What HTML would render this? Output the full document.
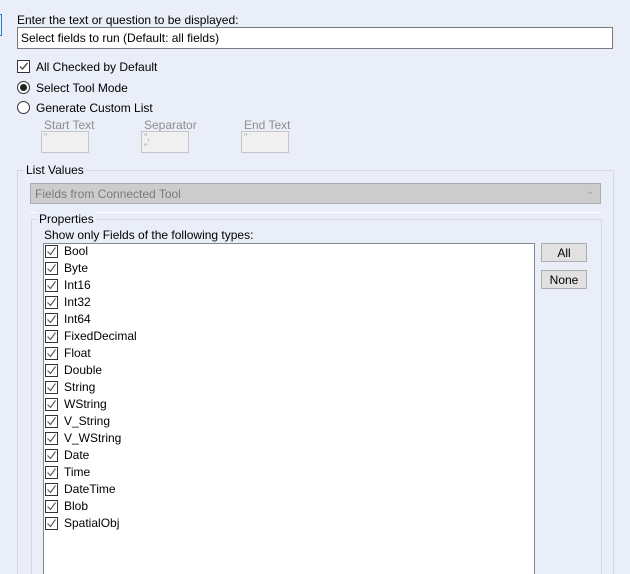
<!DOCTYPE html>
<html style="overflow:hidden;height:574px"><head><style>
body{margin:0;width:630px;height:574px;background:#eaeef8;font-family:"Liberation Sans",sans-serif;font-size:12px;color:#000;position:relative;overflow:hidden}
.a{position:absolute;white-space:nowrap}
.cb{position:absolute;width:11px;height:11px;border:1px solid #333;background:#fff}
.cb svg{position:absolute;left:0;top:0}
.rb{position:absolute;width:11px;height:11px;border:1px solid #333;border-radius:50%;background:#fff}
.gray{color:#8e8e8e}
.sb{position:absolute;width:48px;height:22px;border:1px solid #c6c6c6;background:#f0f0f0;font-size:9px;color:#999;line-height:10px;padding-left:2px;box-sizing:border-box}
.btn{position:absolute;width:46px;height:19px;border:1px solid #adadad;background:#e1e1e1;text-align:center;line-height:18px;box-sizing:border-box}
</style></head><body>
<div class="a" style="left:0;top:14px;width:1px;height:20px;border:1px solid #2a7ad6;border-left:none"></div>
<div class="a" style="left:17px;top:13px">Enter the text or question to be displayed:</div>
<div class="a" style="left:17px;top:27px;width:596px;height:22px;border:1px solid #7a7a7a;background:#fff;box-sizing:border-box;padding:3px 0 0 3px">Select fields to run (Default: all fields)</div>
<div class="cb" style="left:17px;top:60px"><svg width="11" height="11"><path d="M2 5.5l2.5 2.5 5-6" stroke="#333" fill="none" stroke-width="1.2"/></svg></div>
<div class="a" style="left:36px;top:60px">All Checked by Default</div>
<div class="rb" style="left:17px;top:81px"><div style="position:absolute;left:2px;top:2px;width:7px;height:7px;border-radius:50%;background:#222"></div></div>
<div class="a" style="left:36px;top:81px">Select Tool Mode</div>
<div class="rb" style="left:17px;top:101px"></div>
<div class="a" style="left:36px;top:101px">Generate Custom List</div>
<div class="a gray" style="left:44px;top:118px">Start Text</div>
<div class="a gray" style="left:144px;top:118px">Separator</div>
<div class="a gray" style="left:244px;top:118px">End Text</div>
<div class="sb" style="left:41px;top:131px">"</div>
<div class="sb" style="left:141px;top:131px">",<br>"</div>
<div class="sb" style="left:241px;top:131px">"</div>
<div class="a" style="left:17px;top:170px;width:597px;height:404px;border:1px solid #d5d8df;border-bottom:none;box-sizing:border-box"></div>
<div class="a" style="left:24px;top:163px;background:#eaeef8;padding:0 2px">List Values</div>
<div class="a" style="left:30px;top:183px;width:571px;height:21px;background:#cccccc;border:1px solid #adadad;box-sizing:border-box;color:#7a7a7a;padding:3px 0 0 4px">Fields from Connected Tool<span style="position:absolute;right:6px;top:2px;font-size:9px;color:#999">&#8964;</span></div>
<div class="a" style="left:30px;top:212px;width:570px;height:1px;background:#fff"></div>
<div class="a" style="left:31px;top:219px;width:571px;height:355px;border:1px solid #d5d8df;border-bottom:none;box-sizing:border-box"></div>
<div class="a" style="left:37px;top:212px;background:#eaeef8;padding:0 2px">Properties</div>
<div class="a" style="left:44px;top:228px">Show only Fields of the following types:</div>
<div class="a" style="left:43px;top:243px;width:492px;height:331px;border:1px solid #828790;border-bottom:none;background:#fff;box-sizing:border-box"></div>
<div class="btn" style="left:541px;top:243px">All</div>
<div class="btn" style="left:541px;top:270px">None</div>
<div id="items"></div>
<script>
var n=["Bool","Byte","Int16","Int32","Int64","FixedDecimal","Float","Double","String","WString","V_String","V_WString","Date","Time","DateTime","Blob","SpatialObj"],h="";
n.forEach(function(t,i){var y=244+i*17;h+='<div class="cb" style="left:45px;top:'+(y+1)+'px"><svg width="11" height="11"><path d="M1.5 5.5l3 3 5-7" stroke="#555" fill="none" stroke-width="1.1"/></svg></div><div class="a" style="left:64px;top:'+y+'px">'+t+'</div>';});
document.getElementById("items").innerHTML=h;
</script>
</body></html>
